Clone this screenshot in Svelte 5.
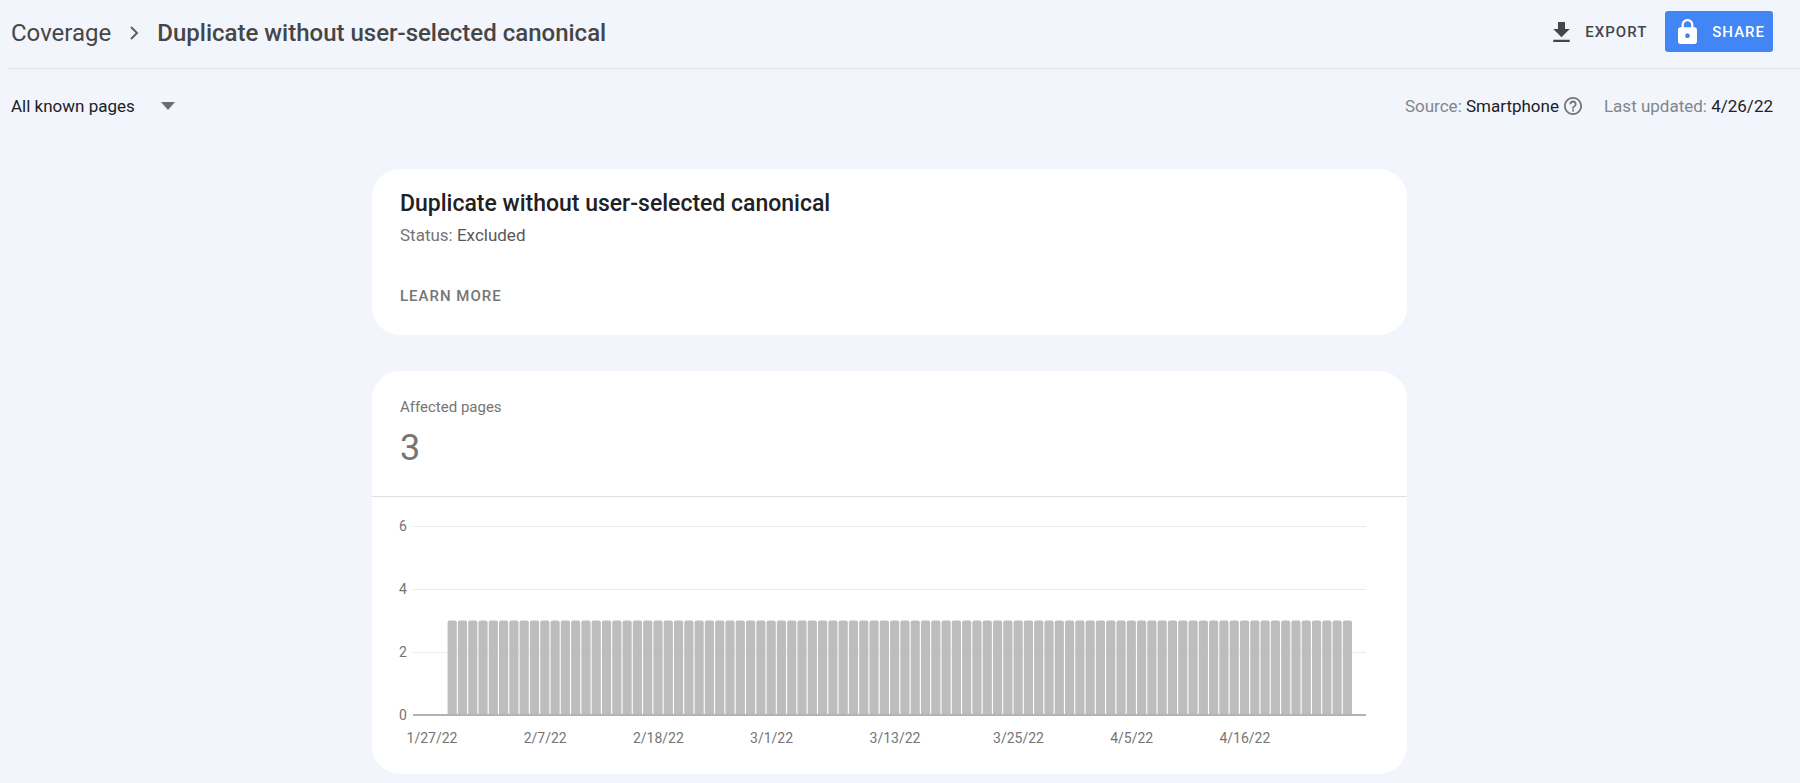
<script lang="ts">
	let scope: string = 'all';

	const plot = { left: 41, right: 994, top: 29, bottom: 218 };
	const pitch = 10.29;
	const firstDay = 60; // centre of 1/27/22

	// one value per day, starting two days after the first label
	const days: number[] = Array(88).fill(3);

	const yTicks = [6, 4, 2, 0];
	const xTicks = [
		{ day: 0, label: '1/27/22' },
		{ day: 11, label: '2/7/22' },
		{ day: 22, label: '2/18/22' },
		{ day: 33, label: '3/1/22' },
		{ day: 45, label: '3/13/22' },
		{ day: 57, label: '3/25/22' },
		{ day: 68, label: '4/5/22' },
		{ day: 79, label: '4/16/22' }
	];

	const dayX = (day: number) => firstDay + day * pitch;
	const valueY = (value: number) => plot.bottom - (value / 6) * (plot.bottom - plot.top);

	function barPath(index: number, value: number) {
		const x = dayX(index + 2) - 5;
		const y = valueY(value);
		return `M${x} ${plot.bottom}V${y + 2}q0 -2 2 -2h5.2q2 0 2 2V${plot.bottom}z`;
	}
</script>

<div class="page">
	<header>
		<nav class="breadcrumb" aria-label="Breadcrumb">
			<a href="#coverage">Coverage</a>
			<svg class="chevron" viewBox="0 0 10 16" width="10" height="16" aria-hidden="true">
				<path d="M2 2l6 6-6 6" fill="none" stroke="#5f6164" stroke-width="2" />
			</svg>
			<h1>Duplicate without user-selected canonical</h1>
		</nav>
		<div class="actions">
			<button class="export">
				<svg viewBox="5 3 14 17" width="17" height="20" aria-hidden="true">
					<path d="M19 9h-4V3H9v6H5l7 7 7-7zM5 18v2h14v-2H5z" fill="currentColor" />
				</svg>
				EXPORT
			</button>
			<button class="share">
				<svg viewBox="4 1 16 21" width="19" height="25" aria-hidden="true">
					<path d="M18 8h-1V6c0-2.760-2.240-5-5-5S7 3.240 7 6v2H6c-1.100 0-2 .9-2 2v10c0 1.100.9 2 2 2h12c1.100 0 2-.9 2-2V10c0-1.100-.9-2-2-2zm-6 9c-1.100 0-2-.9-2-2s.9-2 2-2 2 .9 2 2-.9 2-2 2zm3.100-9H8.900V6c0-1.710 1.390-3.100 3.100-3.100s3.100 1.390 3.100 3.100v2z" fill="currentColor" />
				</svg>
				SHARE
			</button>
		</div>
	</header>

	<div class="toolbar">
		<div class="filter">
			<select bind:value={scope} aria-label="Pages">
				<option value="all">All known pages</option>
				<option value="submitted">Submitted</option>
			</select>
			<svg viewBox="0 0 14 8" width="14" height="8" aria-hidden="true">
				<path d="M0 0h14L7 8z" fill="#6b6d70" />
			</svg>
		</div>
		<div class="meta">
			<span>Source: <b>Smartphone</b></span>
			<button class="help" aria-label="About the source">
				<svg viewBox="2 2 20 20" width="18" height="18" aria-hidden="true">
					<path d="M11 18h2v-2h-2v2zm1-16C6.480 2 2 6.480 2 12s4.480 10 10 10 10-4.480 10-10S17.520 2 12 2zm0 18c-4.410 0-8-3.590-8-8s3.590-8 8-8 8 3.590 8 8-3.590 8-8 8zm0-14c-2.210 0-4 1.790-4 4h2c0-1.100.9-2 2-2s2 .9 2 2c0 2-3 1.750-3 5h2c0-2.250 3-2.500 3-5 0-2.210-1.790-4-4-4z" fill="currentColor" />
				</svg>
			</button>
			<span class="updated">Last updated: <b>4/26/22</b></span>
		</div>
	</div>

	<main>
		<section class="card summary">
			<h2>Duplicate without user-selected canonical</h2>
			<p>Status: <span>Excluded</span></p>
			<a href="#learn-more">LEARN MORE</a>
		</section>

		<section class="card">
			<div class="total">
				<div class="total-label">Affected pages</div>
				<div class="total-value">3</div>
			</div>
			<svg class="chart" viewBox="0 0 1035 277" role="img" aria-label="Affected pages per day">
				{#each yTicks as tick}
					<text class="y-label" x="27" y={valueY(tick) + 5}>{tick}</text>
					{#if tick > 0}
						<line class="grid" x1={plot.left} x2={plot.right} y1={valueY(tick) + 0.5} y2={valueY(tick) + 0.5} />
					{/if}
				{/each}
				{#each days as value, i}
					<path class="bar" d={barPath(i, value)} />
				{/each}
				<line class="axis" x1={plot.left} x2={plot.right} y1={plot.bottom} y2={plot.bottom} />
				{#each xTicks as tick}
					<text class="x-label" x={dayX(tick.day)} y="246">{tick.label}</text>
				{/each}
			</svg>
		</section>
	</main>
</div>

<style>
	:global(body) {
		background: #f2f5fc;
	}

	.page {
		font-family: Roboto, 'Liberation Sans', sans-serif;
		font-size: 17px;
		line-height: 24px;
		color: #202124;
		padding-bottom: 9px;
	}

	h1,
	h2,
	p {
		margin: 0;
	}

	button {
		display: flex;
		align-items: center;
		border: 0;
		background: none;
		font: inherit;
		letter-spacing: inherit;
		cursor: pointer;
	}

	a {
		color: inherit;
		text-decoration: none;
	}

	header {
		display: flex;
		justify-content: space-between;
		align-items: flex-start;
		margin-left: 7px;
		padding: 11px 27px 16px 4px;
		border-bottom: 1px solid #dfe1e3;
	}

	.breadcrumb {
		display: flex;
		align-items: center;
		padding-top: 6px;
		font-size: 24px;
		line-height: 32px;
		color: #444648;
	}

	.chevron {
		margin: 0 18px;
	}

	h1 {
		font-size: 24px;
		font-weight: 500;
	}

	.actions {
		display: flex;
		align-items: center;
		gap: 18px;
		font-size: 15px;
		font-weight: 500;
		letter-spacing: 1px;
	}

	.export {
		gap: 15px;
		padding: 0;
		color: #444648;
	}

	.share {
		gap: 15px;
		height: 41px;
		padding: 0 8px 0 13px;
		border-radius: 3px;
		background: #4285f4;
		color: #fff;
	}

	.toolbar {
		display: flex;
		justify-content: space-between;
		align-items: center;
		padding: 25px 27px 0 11px;
	}

	.filter {
		display: grid;
		align-items: center;
	}

	.filter select,
	.filter svg {
		grid-area: 1 / 1;
	}

	.filter select {
		appearance: none;
		border: 0;
		padding: 0 40px 0 0;
		background: none;
		font: inherit;
		color: inherit;
	}

	.filter svg {
		justify-self: end;
		pointer-events: none;
	}

	.meta {
		display: flex;
		align-items: center;
		color: #80868b;
	}

	.meta b {
		font-weight: 400;
		color: #202124;
	}

	.help {
		margin: 0 22px 0 5px;
		padding: 0;
		color: #757575;
	}

	main {
		display: grid;
		gap: 36px;
		max-width: 1035px;
		margin: 51px auto 0;
		padding-right: 21px;
	}

	.card {
		border-radius: 28px;
		background: #fff;
		overflow: hidden;
	}

	.summary {
		padding: 21px 28px 27px;
	}

	h2 {
		font-size: 23px;
		line-height: 28px;
		font-weight: 500;
	}

	.summary p {
		margin: 5px 0 36px;
		color: #757575;
	}

	.summary p span {
		color: #58595b;
	}

	.summary a {
		display: inline-block;
		font-size: 15px;
		font-weight: 500;
		letter-spacing: 1px;
		color: #757575;
	}

	.total {
		padding: 24px 28px 28px;
		border-bottom: 1px solid #dfdfdf;
		color: #757575;
	}

	.total-label {
		font-size: 15px;
	}

	.total-value {
		margin-top: 9px;
		font-size: 36px;
		line-height: 40px;
	}

	.chart {
		display: block;
		width: 100%;
	}

	.chart text {
		font-size: 14px;
		fill: #757575;
	}

	.x-label {
		text-anchor: middle;
	}

	.grid {
		stroke: #ebebeb;
	}

	.axis {
		stroke: #b3b3b3;
		stroke-width: 2;
	}

	.bar {
		fill: #bdbdbd;
	}
</style>
